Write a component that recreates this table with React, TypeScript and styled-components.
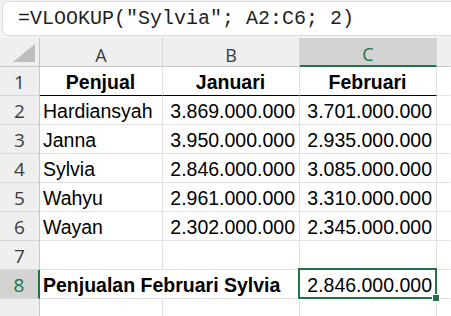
import React from 'react';
import styled, { createGlobalStyle } from 'styled-components';

const GREEN = '#217346';
const GRID = '#e1e1e1';
const HEAD_LINE = '#c6c6c6';

const GlobalStyle = createGlobalStyle`
	html, body {
		margin: 0;
		padding: 0;
		background: #f3f3f3;
	}
`;

type Align = 'left' | 'center' | 'right';

type RowData = {
	cells: string[];
	bold?: boolean;
	align?: Align[];
	ruled?: boolean;
};

const rows: RowData[] = [
	{ cells: ['Penjual', 'Januari', 'Februari'], bold: true, align: ['center', 'center', 'center'], ruled: true },
	{ cells: ['Hardiansyah', '3.869.000.000', '3.701.000.000'] },
	{ cells: ['Janna', '3.950.000.000', '2.935.000.000'] },
	{ cells: ['Sylvia', '2.846.000.000', '3.085.000.000'] },
	{ cells: ['Wahyu', '2.961.000.000', '3.310.000.000'] },
	{ cells: ['Wayan', '2.302.000.000', '2.345.000.000'] },
	{ cells: ['', '', ''] },
];

export default function App() {
	return (
		<>
			<GlobalStyle />
			<Window>
				<FormulaBar>=VLOOKUP("Sylvia"; A2:C6; 2)</FormulaBar>

				<Sheet>
					{/* column headers */}
					<Corner>
						<svg width="22" height="18" viewBox="0 0 22 18">
							<polygon points="22,0 22,18 0,18" fill="#bdbdbd" />
						</svg>
					</Corner>
					<ColHead>A</ColHead>
					<ColHead>B</ColHead>
					<ColHead $active>C</ColHead>
					<ColHead $last />

					{rows.map((row, i) => (
						<React.Fragment key={i}>
							<RowHead>{i + 1}</RowHead>
							{row.cells.map((text, j) => (
								<Cell
									key={j}
									$align={row.align ? row.align[j] : j === 0 ? 'left' : 'right'}
									$bold={row.bold}
									$ruled={row.ruled}
								>
									{text}
								</Cell>
							))}
							<Cell $last />
						</React.Fragment>
					))}

					{/* result row */}
					<RowHead $active>8</RowHead>
					<Cell $align="left" $bold $open>
						Penjualan Februari Sylvia
					</Cell>
					<Cell $open />
					<Cell $align="right" $selected>
						2.846.000.000
					</Cell>
					<Cell $last />

					<RowHead />
					<Cell />
					<Cell />
					<Cell />
					<Cell $last />
				</Sheet>
			</Window>
		</>
	);
}

const Window = styled.div`
	width: 451px;
	height: 316px;
	overflow: hidden;
	display: flex;
	flex-direction: column;
	background: #f3f3f3;
`;

const FormulaBar = styled.div`
	flex-shrink: 0;
	box-sizing: border-box;
	height: 35px;
	margin: 1px -10px 0 2px;
	padding: 0 0 1px 15px;
	display: flex;
	align-items: center;
	background: #ffffff;
	border: 1px solid #dadada;
	border-radius: 7px;
	font-family: 'Liberation Mono', 'DejaVu Sans Mono', monospace;
	font-size: 20px;
	color: #1f1f1f;
	white-space: pre;
`;

const Sheet = styled.div`
	flex-shrink: 0;
	margin-top: 2px;
	display: grid;
	grid-template-columns: 40px 123px 137px 137px 1fr;
	grid-auto-rows: 29px;
	background: #ffffff;
`;

const HeadBase = styled.div`
	box-sizing: border-box;
	display: flex;
	align-items: center;
	justify-content: center;
	background: #efefef;
	font-family: 'Open Sans', 'Noto Sans', sans-serif;
	color: #3b3b3b;
`;

const Corner = styled(HeadBase)`
	align-items: flex-end;
	justify-content: flex-end;
	padding: 0 4px 4px 0;
	border-right: 1px solid ${HEAD_LINE};
	border-bottom: 1px solid ${HEAD_LINE};
`;

const ColHead = styled(HeadBase)<{ $active?: boolean; $last?: boolean }>`
	font-size: 18px;
	padding-top: 5px;
	background: ${p => (p.$active ? '#d3d3d3' : '#efefef')};
	color: ${p => (p.$active ? GREEN : '#3b3b3b')};
	border-right: 1px solid ${p => (p.$last ? 'transparent' : '#d6d6d6')};
	border-bottom: ${p => (p.$active ? `2px solid ${GREEN}` : `1px solid ${HEAD_LINE}`)};
`;

const RowHead = styled(HeadBase)<{ $active?: boolean }>`
	font-size: 19px;
	padding-top: 2px;
	background: ${p => (p.$active ? '#d3d3d3' : '#efefef')};
	color: ${p => (p.$active ? GREEN : '#3b3b3b')};
	border-right: ${p => (p.$active ? `2px solid ${GREEN}` : `1px solid ${HEAD_LINE}`)};
	border-bottom: 1px solid #d6d6d6;
`;

const Cell = styled.div<{
	$align?: Align;
	$bold?: boolean;
	$ruled?: boolean;
	$open?: boolean;
	$selected?: boolean;
	$last?: boolean;
}>`
	position: relative;
	box-sizing: border-box;
	display: flex;
	align-items: center;
	padding: 2px 4px 0 3px;
	justify-content: ${p =>
		p.$align === 'center' ? 'center' : p.$align === 'right' ? 'flex-end' : 'flex-start'};
	font-family: 'Liberation Sans', Arial, sans-serif;
	font-size: 19.5px;
	font-weight: ${p => (p.$bold ? 700 : 400)};
	color: #000000;
	white-space: nowrap;
	border-right: 1px solid ${p => (p.$open || p.$last ? 'transparent' : GRID)};
	border-bottom: 1px solid ${p => (p.$ruled ? '#000000' : GRID)};

	${p =>
		p.$selected &&
		`
		&::after {
			content: '';
			position: absolute;
			left: -2px;
			top: -2px;
			right: -1px;
			bottom: -1px;
			border: 2px solid ${GREEN};
		}
		&::before {
			content: '';
			position: absolute;
			right: -4px;
			bottom: -4px;
			width: 6px;
			height: 6px;
			background: ${GREEN};
			border: 1px solid #ffffff;
			z-index: 1;
		}
	`}
`;
